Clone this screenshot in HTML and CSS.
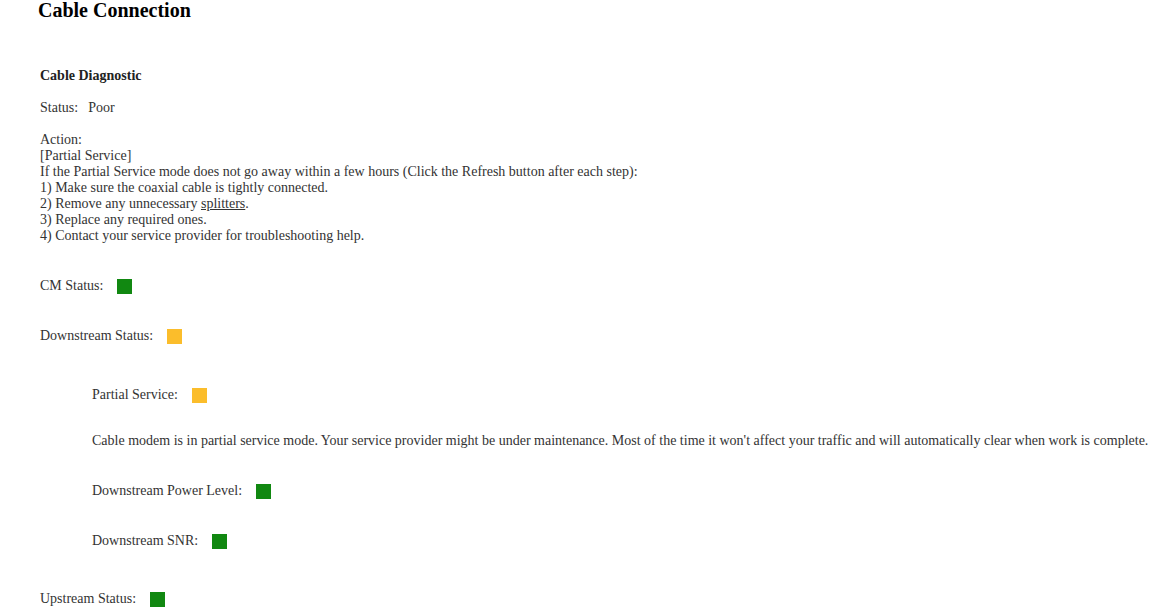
FILE: index.html
```html
<!DOCTYPE html>
<html lang="en">
<head>
<meta charset="utf-8">
<title>Cable Connection</title>
<link rel="stylesheet" href="styles.css">
</head>
<body>
<div class="page">
  <h1 class="title">Cable Connection</h1>
  <div class="content">
    <h2 class="section-title">Cable Diagnostic</h2>
    <div class="row status-row">Status:<span class="status-value">Poor</span></div>
    <div class="action">
      Action:<br>
      [Partial Service]<br>
      If the Partial Service mode does not go away within a few hours (Click the Refresh button after each step):<br>
      1) Make sure the coaxial cable is tightly connected.<br>
      2) Remove any unnecessary <a class="link" href="#">splitters</a>.<br>
      3) Replace any required ones.<br>
      4) Contact your service provider for troubleshooting help.
    </div>

    <div class="row gap-cm">CM Status:<span class="dot green"></span></div>
    <div class="row gap-34">Downstream Status:<span class="dot yellow"></span></div>

    <div class="sub">
      <div class="row gap-ps">Partial Service:<span class="dot yellow"></span></div>
      <div class="row gap-30 long">Cable modem is in partial service mode. Your service provider might be under maintenance. Most of the time it won't affect your traffic and will automatically clear when work is complete.</div>
      <div class="row gap-34">Downstream Power Level:<span class="dot green"></span></div>
      <div class="row gap-34">Downstream SNR:<span class="dot green"></span></div>
    </div>

    <div class="row gap-up">Upstream Status:<span class="dot green"></span></div>
  </div>
</div>
</body>
</html>
```
FILE: styles.css
```css
html, body {
  margin: 0;
  padding: 0;
  background: #ffffff;
}

body {
  font-family: "Liberation Serif", "Times New Roman", serif;
  font-size: 14px;
  line-height: 16px;
  color: #333333;
  overflow: hidden;
}

.page {
  padding-left: 38px;
}

.title {
  margin: 0;
  font-size: 20px;
  line-height: 20px;
  font-weight: bold;
  color: #000000;
}

.content {
  padding-left: 2px;
}

.section-title {
  margin: 48px 0 0 0;
  font-size: 14px;
  line-height: 16px;
  font-weight: bold;
  color: #222222;
}

.row {
  height: 16px;
  white-space: nowrap;
}

.status-row {
  margin-top: 16px;
}

.status-value {
  margin-left: 10px;
}

.action {
  margin-top: 16px;
}

.link {
  color: #333333;
  text-decoration: underline;
}

.gap-cm {
  margin-top: 34px;
}

.gap-34 {
  margin-top: 34px;
}

.sub {
  padding-left: 52px;
}

.gap-ps {
  margin-top: 43px;
}

.gap-30 {
  margin-top: 30px;
}

.gap-up {
  margin-top: 42px;
}

.dot {
  display: inline-block;
  width: 15px;
  height: 15px;
  margin-left: 14px;
  vertical-align: middle;
}

.green {
  background: #118811;
}

.yellow {
  background: #fbbd2b;
}
```
